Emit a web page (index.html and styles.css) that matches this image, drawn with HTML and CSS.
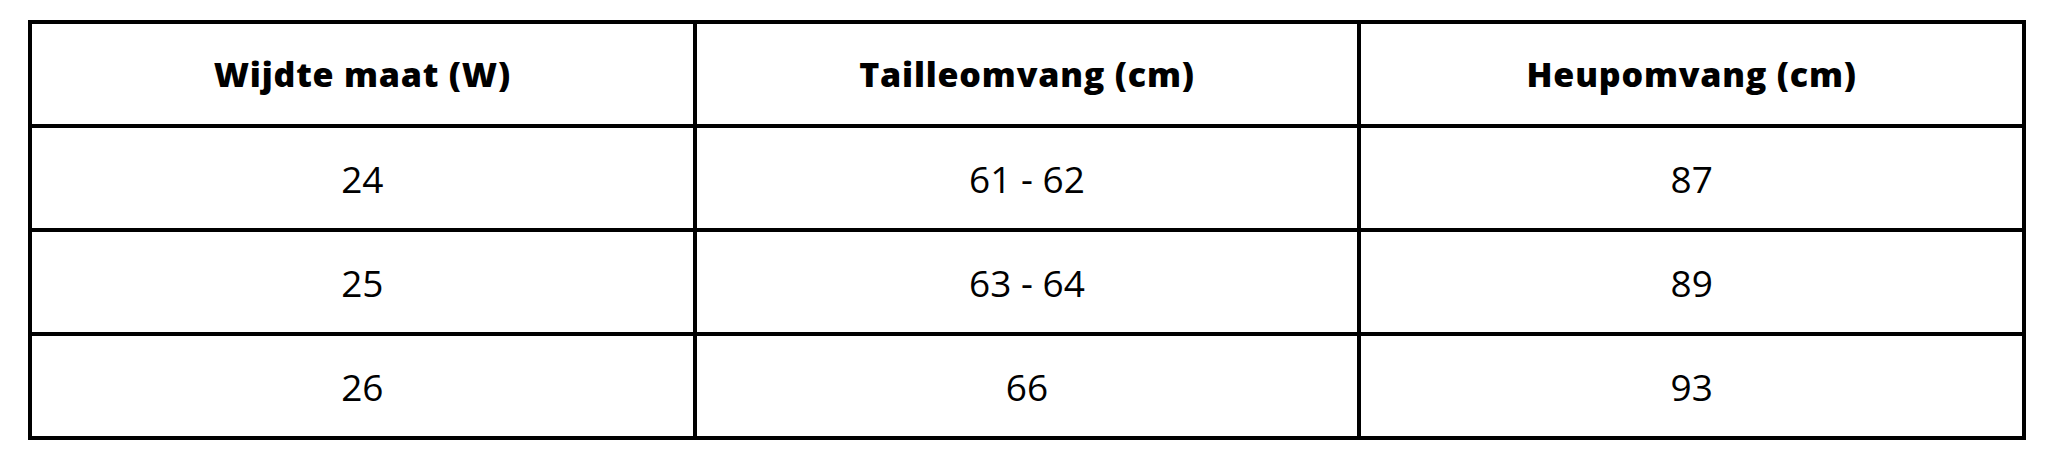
FILE: index.html
```html
<!DOCTYPE html>
<html lang="nl">
<head>
    <meta charset="UTF-8">
    <title>Maattabel</title>
    <link rel="stylesheet" href="styles.css">
</head>
<body>

    <!-- Size chart -->
    <table class="size-table">
        <tr>
            <th>Wijdte maat (W)</th>
            <th>Tailleomvang (cm)</th>
            <th>Heupomvang (cm)</th>
        </tr>
        <tr>
            <td>24</td>
            <td>61 - 62</td>
            <td>87</td>
        </tr>
        <tr>
            <td>25</td>
            <td>63 - 64</td>
            <td>89</td>
        </tr>
        <tr>
            <td>26</td>
            <td>66</td>
            <td>93</td>
        </tr>
    </table>

</body>
</html>
```

FILE: styles.css
```css
body {
    margin: 0;
    background: #fff;
    color: #000;
    font-family: 'Open Sans', 'Noto Sans', sans-serif;
}

/* Size chart */
.size-table {
    margin: 20px 0 0 28px;
    width: 1998px;
    table-layout: fixed;
    border-collapse: collapse;
    border: 4px solid #000;
}

.size-table tr {
    height: 104px;
}

.size-table th,
.size-table td {
    border: 4px solid #000;
    padding: 0;
    text-align: center;
    vertical-align: middle;
}

.size-table th {
    font-size: 34px;
    font-weight: 800;
    letter-spacing: 0.8px;
}

.size-table td {
    font-size: 37px;
    font-weight: normal;
}
```
